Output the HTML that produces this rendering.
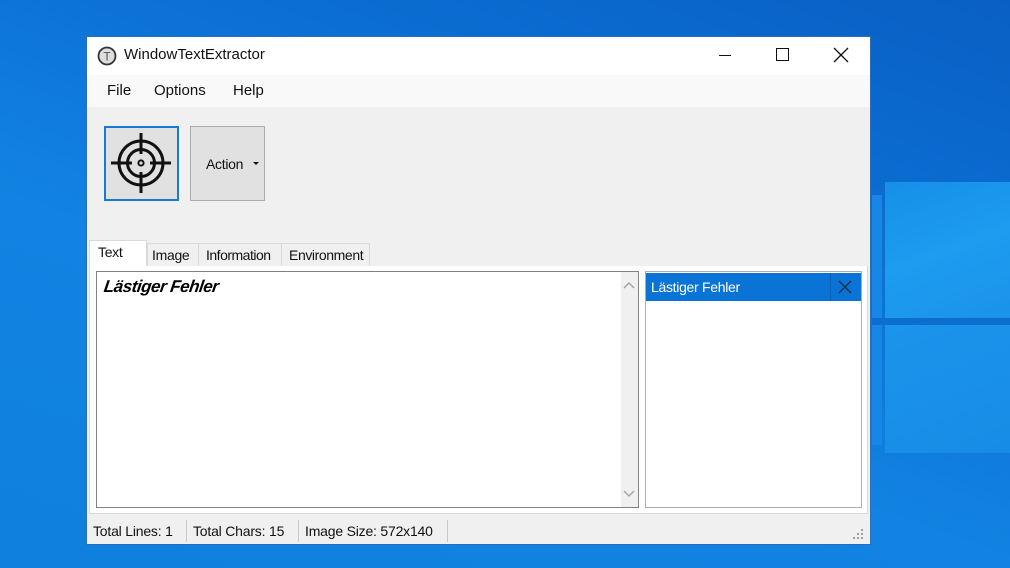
<!DOCTYPE html>
<html><head><style>
*{margin:0;padding:0;box-sizing:border-box}
body{width:1010px;height:568px;overflow:hidden;position:relative;font-family:"Liberation Sans",sans-serif;background:#0b74d6}
.abs{position:absolute}
.win{left:86px;top:36px;width:785px;height:509px;background:#f0f0f0;border:1px solid #2a6db8;}
</style></head><body>
<div class="abs" style="left:0;top:0;width:1010px;height:568px;background:linear-gradient(200deg,#0a5fc4 0%,#0b6fd3 30%,#1283e2 60%,#0f80dd 100%)"></div>
<!-- windows logo panes -->
<div class="abs" style="left:872px;top:195px;width:10px;height:125px;background:#1687e2"></div>
<div class="abs" style="left:885px;top:182px;width:125px;height:136px;background:linear-gradient(160deg,#168fe8,#1d9cf0 50%,#1a93ea)"></div>
<div class="abs" style="left:872px;top:325px;width:10px;height:120px;background:#1687e2"></div>
<div class="abs" style="left:885px;top:325px;width:125px;height:128px;background:linear-gradient(160deg,#1b94ec,#178ce6)"></div>
<div class="abs" style="left:872px;top:318px;width:138px;height:7px;background:#0c6fd0"></div>

<div class="abs win">
 <div class="abs" style="left:0;top:0;width:783px;height:38px;background:#fff"></div>
 <svg class="abs" style="left:10px;top:9px" width="20" height="20" viewBox="0 0 20 20"><circle cx="10" cy="10" r="8.5" fill="#ddd" stroke="#333" stroke-width="1.8"/><text x="10" y="14.5" font-size="12" text-anchor="middle" fill="#555" font-family="Liberation Sans">T</text></svg>
 <div class="abs" style="left:37px;top:9px;font-size:15px;color:#111">WindowTextExtractor</div>
 <div class="abs" style="left:632px;top:18px;width:12px;height:1px;background:#111"></div>
 <div class="abs" style="left:689px;top:11px;width:13px;height:13px;border:1px solid #111"></div>
 <svg class="abs" style="left:746px;top:10px" width="16" height="16"><path d="M1 1L15 15M15 1L1 15" stroke="#111" stroke-width="1.3"/></svg>
 <div class="abs" style="left:0;top:38px;width:783px;height:32px;background:#f9f9f9"></div>
 <div class="abs" style="left:20px;top:45px;font-size:15px;color:#111">File</div>
 <div class="abs" style="left:67px;top:45px;font-size:15px;color:#111">Options</div>
 <div class="abs" style="left:146px;top:45px;font-size:15px;color:#111">Help</div>
 <div class="abs" style="left:17px;top:89px;width:75px;height:75px;border:2px solid #1979d6;background:#e1e1e1"></div>
 <svg class="abs" style="left:23px;top:95px" width="62" height="62" viewBox="0 0 62 62" fill="none" stroke="#111" stroke-width="3"><circle cx="31" cy="31" r="22"/><circle cx="31" cy="31" r="13.5"/><circle cx="31" cy="31" r="2.6" stroke-width="2"/><path d="M31 1V22M31 40V61M1 31H22M40 31H61"/></svg>
 <div class="abs" style="left:103px;top:89px;width:75px;height:75px;border:1px solid #adadad;background:#e1e1e1"></div>
 <div class="abs" style="left:119px;top:119px;font-size:14px;color:#111;letter-spacing:-0.3px">Action</div>
 <div class="abs" style="left:166px;top:125px;width:0;height:0;border-left:3px solid transparent;border-right:3px solid transparent;border-top:3px solid #111"></div>
 <!-- tabs -->
 <div class="abs" style="left:2px;top:203px;width:58px;height:27px;background:#fff;border:1px solid #d9d9d9;border-bottom:none"></div>
 <div class="abs" style="left:11px;top:207px;font-size:14px;color:#111;letter-spacing:-0.3px">Text</div>
 <div class="abs" style="left:60px;top:206px;width:223px;height:23px;border:1px solid #d9d9d9;border-bottom:none;background:#f0f0f0"></div>
 <div class="abs" style="left:111px;top:206px;width:1px;height:23px;background:#d9d9d9"></div>
 <div class="abs" style="left:194px;top:206px;width:1px;height:23px;background:#d9d9d9"></div>
 <div class="abs" style="left:65px;top:210px;font-size:14px;color:#111;letter-spacing:-0.3px">Image</div>
 <div class="abs" style="left:119px;top:210px;font-size:14px;color:#111;letter-spacing:-0.5px">Information</div>
 <div class="abs" style="left:202px;top:210px;font-size:14px;color:#111;letter-spacing:-0.4px">Environment</div>
 <div class="abs" style="left:2px;top:229px;width:779px;height:248px;background:#fff;border:1px solid #d9d9d9;border-top:none"></div>
 <div class="abs" style="left:9px;top:234px;width:543px;height:237px;border:1px solid #828282;background:#fff"></div>
 <div class="abs" style="left:534px;top:235px;width:17px;height:235px;background:#f0f0f0"></div>
 <svg class="abs" style="left:536px;top:245px" width="12" height="8"><path d="M1 6L6 1L11 6" stroke="#a0a0a0" stroke-width="1.3" fill="none"/></svg>
 <svg class="abs" style="left:536px;top:453px" width="12" height="8"><path d="M1 1L6 6L11 1" stroke="#a0a0a0" stroke-width="1.3" fill="none"/></svg>
 <div class="abs" style="left:17px;top:240px;font-size:17px;font-weight:bold;font-style:italic;color:#000;letter-spacing:-0.5px;transform:skewX(-8deg)">Lästiger Fehler</div>
 <div class="abs" style="left:558px;top:234px;width:217px;height:237px;border:1px solid #adadad;background:#fff"></div>
 <div class="abs" style="left:559px;top:236px;width:215px;height:28px;background:#0a74d6"></div>
 <div class="abs" style="left:743px;top:236px;width:1px;height:28px;background:#0a5fb0"></div>
 <div class="abs" style="left:564px;top:242px;font-size:14px;color:#fff;letter-spacing:-0.3px">Lästiger Fehler</div>
 <svg class="abs" style="left:751px;top:243px" width="14" height="14"><path d="M1 1L13 13M13 1L1 13" stroke="#1b2b44" stroke-width="1.3"/></svg>
 <!-- status -->
 <div class="abs" style="left:6px;top:486px;font-size:14px;color:#111;letter-spacing:-0.2px">Total Lines: 1</div>
 <div class="abs" style="left:99px;top:483px;width:1px;height:22px;background:#c8c8c8"></div>
 <div class="abs" style="left:106px;top:486px;font-size:14px;color:#111;letter-spacing:-0.2px">Total Chars: 15</div>
 <div class="abs" style="left:211px;top:483px;width:1px;height:22px;background:#c8c8c8"></div>
 <div class="abs" style="left:218px;top:486px;font-size:14px;color:#111;letter-spacing:-0.2px">Image Size: 572x140</div>
 <div class="abs" style="left:360px;top:483px;width:1px;height:22px;background:#c8c8c8"></div>
 <svg class="abs" style="left:765px;top:492px" width="14" height="12" fill="#a0a0a0"><rect x="9" y="0" width="2" height="2"/><rect x="5" y="4" width="2" height="2"/><rect x="9" y="4" width="2" height="2"/><rect x="1" y="8" width="2" height="2"/><rect x="5" y="8" width="2" height="2"/><rect x="9" y="8" width="2" height="2"/></svg>
</div>
</body></html>
